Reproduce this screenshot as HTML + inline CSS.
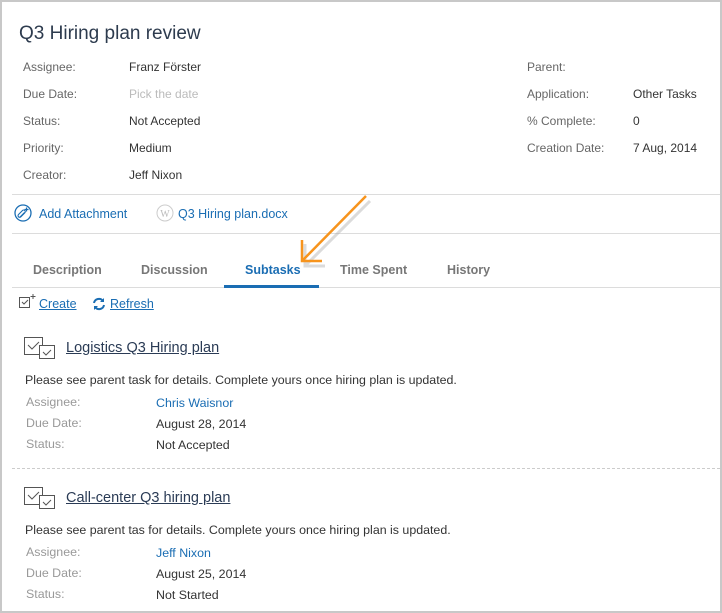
<!DOCTYPE html>
<html><head><meta charset="utf-8"><style>
*{margin:0;padding:0;box-sizing:border-box}
body{width:722px;height:613px;overflow:hidden;background:#fff;font-family:"Liberation Sans",sans-serif;font-size:12px;color:#333;position:relative}
.frame{position:absolute;left:0;top:0;width:722px;height:613px;border:2px solid #c8c8c8}
.a{position:absolute;white-space:nowrap}
.l{color:#666}
.v{color:#333}
.lnk{color:#1a6db3}
.hr{position:absolute;height:1px;background:#dcdcdc}
.st{color:#2a3b55;font-size:14.5px;text-decoration:underline}
.s{font-size:12.4px}
</style></head><body>
<div class="frame"></div>
<div class="a" style="left:19px;top:23px;font-size:19px;color:#2d3b4e">Q3 Hiring plan review</div>

<div class="a l" style="left:23px;top:60px">Assignee:</div><div class="a v" style="left:129px;top:60px">Franz Förster</div>
<div class="a l" style="left:23px;top:87px">Due Date:</div><div class="a" style="left:129px;top:87px;color:#bbb">Pick the date</div>
<div class="a l" style="left:23px;top:114px">Status:</div><div class="a v" style="left:129px;top:114px">Not Accepted</div>
<div class="a l" style="left:23px;top:141px">Priority:</div><div class="a v" style="left:129px;top:141px">Medium</div>
<div class="a l" style="left:23px;top:168px">Creator:</div><div class="a v" style="left:129px;top:168px">Jeff Nixon</div>

<div class="a l" style="left:527px;top:60px">Parent:</div>
<div class="a l" style="left:527px;top:87px">Application:</div><div class="a v" style="left:633px;top:87px">Other Tasks</div>
<div class="a l" style="left:527px;top:114px">% Complete:</div><div class="a v" style="left:633px;top:114px">0</div>
<div class="a l" style="left:527px;top:141px">Creation Date:</div><div class="a v" style="left:633px;top:141px">7 Aug, 2014</div>

<div class="hr" style="left:12px;top:194px;width:708px"></div>
<svg class="a" style="left:14px;top:204px" width="18" height="18" viewBox="0 0 18 18"><circle cx="9" cy="9" r="8" fill="none" stroke="#1a6db3" stroke-width="1.3"/><path d="M6 13 L10.5 8.5 M5 10 l3.5-3.5 a1.6 1.6 0 0 1 2.3 2.3 l-4 4 a1.6 1.6 0 0 1-2.3-2.3z" fill="none" stroke="#1a6db3" stroke-width="1.1"/><path d="M12.5 3.5v4M10.5 5.5h4" stroke="#1a6db3" stroke-width="1.2"/></svg>
<div class="a lnk" style="left:39px;top:207px;font-size:12.5px">Add Attachment</div>
<svg class="a" style="left:156px;top:204px" width="18" height="18"><circle cx="9" cy="9" r="8" fill="none" stroke="#ccc"/><text x="9" y="13" font-size="10" text-anchor="middle" fill="#bbb" font-family="Liberation Serif">W</text></svg>
<div class="a lnk" style="left:178px;top:207px;font-size:12.5px">Q3 Hiring plan.docx</div>
<div class="hr" style="left:12px;top:233px;width:708px"></div>

<div class="a" style="left:33px;top:263px;color:#777;font-weight:bold;font-size:12.5px">Description</div>
<div class="a" style="left:141px;top:263px;color:#777;font-weight:bold;font-size:12.5px">Discussion</div>
<div class="a" style="left:245px;top:263px;color:#1a6db3;font-weight:bold;font-size:12.5px">Subtasks</div>
<div class="a" style="left:340px;top:263px;color:#777;font-weight:bold;font-size:12.5px">Time Spent</div>
<div class="a" style="left:447px;top:263px;color:#777;font-weight:bold;font-size:12.5px">History</div>
<div class="hr" style="left:12px;top:287px;width:708px"></div>
<div class="a" style="left:224px;top:285px;width:95px;height:3px;background:#1a6db3"></div>

<svg class="a" style="left:340px;top:190px;overflow:visible" width="40" height="80"><path d="M27 7 L-38 72 M-38 50 L-38 72 L-18 72" fill="none" stroke="#999" stroke-width="3" opacity=".35" transform="translate(3,4)"/><path d="M26 6 L-38 71 M-38 50 L-38 71 L-18 71" fill="none" stroke="#f7941d" stroke-width="2.5"/></svg>

<svg class="a" style="left:18px;top:293px" width="18" height="16"><rect x="1.5" y="4.5" width="10" height="10" fill="none" stroke="#555"/><path d="M4 9l2 2 4-4" fill="none" stroke="#555"/><path d="M15 1v5M12.5 3.5h5" stroke="#555"/></svg>
<div class="a lnk" style="left:39px;top:297px;text-decoration:underline;font-size:12.5px">Create</div>
<svg class="a" style="left:92px;top:297px" width="14" height="14" viewBox="0 0 14 14"><path d="M2 6a5 5 0 0 1 9-2 M12 8a5 5 0 0 1-9 2" fill="none" stroke="#1a6db3" stroke-width="2"/><path d="M12 1v4h-4z M2 13v-4h4z" fill="#1a6db3"/></svg>
<div class="a lnk" style="left:110px;top:297px;text-decoration:underline;font-size:12.5px">Refresh</div>

<svg class="a" style="left:23px;top:336px" width="34" height="24"><rect x="1.5" y="1.5" width="18" height="17" fill="#fff" stroke="#555"/><path d="M5 9l4 4 7-7" fill="none" stroke="#555"/><rect x="16.5" y="9.5" width="15" height="13" fill="#fff" stroke="#555"/><path d="M20 16l3 3 5-5" fill="none" stroke="#555"/></svg>
<div class="a st" style="left:66px;top:340px">Logistics Q3 Hiring plan</div>
<div class="a v s" style="left:25px;top:373px">Please see parent task for details. Complete yours once hiring plan is updated.</div>
<div class="a s" style="left:26px;top:395px;color:#999">Assignee:</div><div class="a lnk s" style="left:156px;top:396px">Chris Waisnor</div>
<div class="a s" style="left:26px;top:416px;color:#999">Due Date:</div><div class="a v s" style="left:156px;top:417px">August 28, 2014</div>
<div class="a s" style="left:26px;top:437px;color:#999">Status:</div><div class="a v s" style="left:156px;top:438px">Not Accepted</div>

<div class="a" style="left:12px;top:468px;width:708px;border-top:1px dashed #ccc"></div>

<svg class="a" style="left:23px;top:486px" width="34" height="24"><rect x="1.5" y="1.5" width="18" height="17" fill="#fff" stroke="#555"/><path d="M5 9l4 4 7-7" fill="none" stroke="#555"/><rect x="16.5" y="9.5" width="15" height="13" fill="#fff" stroke="#555"/><path d="M20 16l3 3 5-5" fill="none" stroke="#555"/></svg>
<div class="a st" style="left:66px;top:490px">Call-center Q3 hiring plan</div>
<div class="a v s" style="left:25px;top:523px">Please see parent tas for details. Complete yours once hiring plan is updated.</div>
<div class="a s" style="left:26px;top:545px;color:#999">Assignee:</div><div class="a lnk s" style="left:156px;top:546px">Jeff Nixon</div>
<div class="a s" style="left:26px;top:566px;color:#999">Due Date:</div><div class="a v s" style="left:156px;top:567px">August 25, 2014</div>
<div class="a s" style="left:26px;top:587px;color:#999">Status:</div><div class="a v s" style="left:156px;top:588px">Not Started</div>
</body></html>
